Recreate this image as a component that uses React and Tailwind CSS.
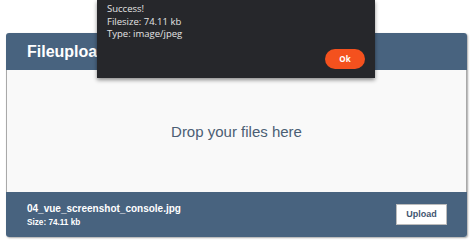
export default function App() {
  return (
    <div className="relative h-[246px] w-[474px] overflow-hidden bg-white font-['Liberation_Sans',Arial,sans-serif]">
      {/* Card */}
      <div className="ml-[6px] mt-[33px] flex h-[204px] w-[461px] flex-col overflow-hidden rounded-[3px] shadow-[1px_1px_2px_rgba(0,0,0,0.35)]">
        <div className="flex h-[37px] items-center bg-[#48637f] pl-[21px]">
          <h1 className="text-[16px] font-bold text-white">Fileupload</h1>
        </div>
        <div className="flex flex-1 items-center justify-center border-x border-[#a9a9a9] bg-[#f9f9f9] pt-[2px]">
          <p className="text-[15px] text-[#4b5e74]">Drop your files here</p>
        </div>
        <div className="flex h-[45px] items-center justify-between bg-[#48637f] pl-[21px] pr-[20px]">
          <div className="flex flex-col pt-[1px] text-white">
            <span className="text-[10px] font-bold leading-[15px]">04_vue_screenshot_console.jpg</span>
            <span className="text-[8.2px] font-bold leading-[14px]">Size: 74.11 kb</span>
          </div>
          <button className="h-[21px] w-[51px] border border-[#bcbcbc] bg-white text-[9px] font-bold text-[#3f5670]">
            Upload
          </button>
        </div>
      </div>

      {/* Dialog */}
      <div className="absolute left-[97px] top-0 flex h-[78px] w-[278px] flex-col justify-between bg-[#26272b] pb-[9px] pl-[10px] pr-[10px] pt-[3px] shadow-[0_2px_4px_rgba(0,0,0,0.45)] font-['Open_Sans','Noto_Sans',sans-serif]">
        <div className="flex flex-col text-[9.5px] leading-[12.5px] text-[#e4e4e4]">
          <span>Success!</span>
          <span>Filesize: 74.11 kb</span>
          <span>Type: image/jpeg</span>
        </div>
        <div className="flex justify-end">
          <button className="h-[20px] w-[40px] rounded-full bg-[#f4511e] text-[8px] font-bold text-white">
            Ok
          </button>
        </div>
      </div>
    </div>
  )
}
